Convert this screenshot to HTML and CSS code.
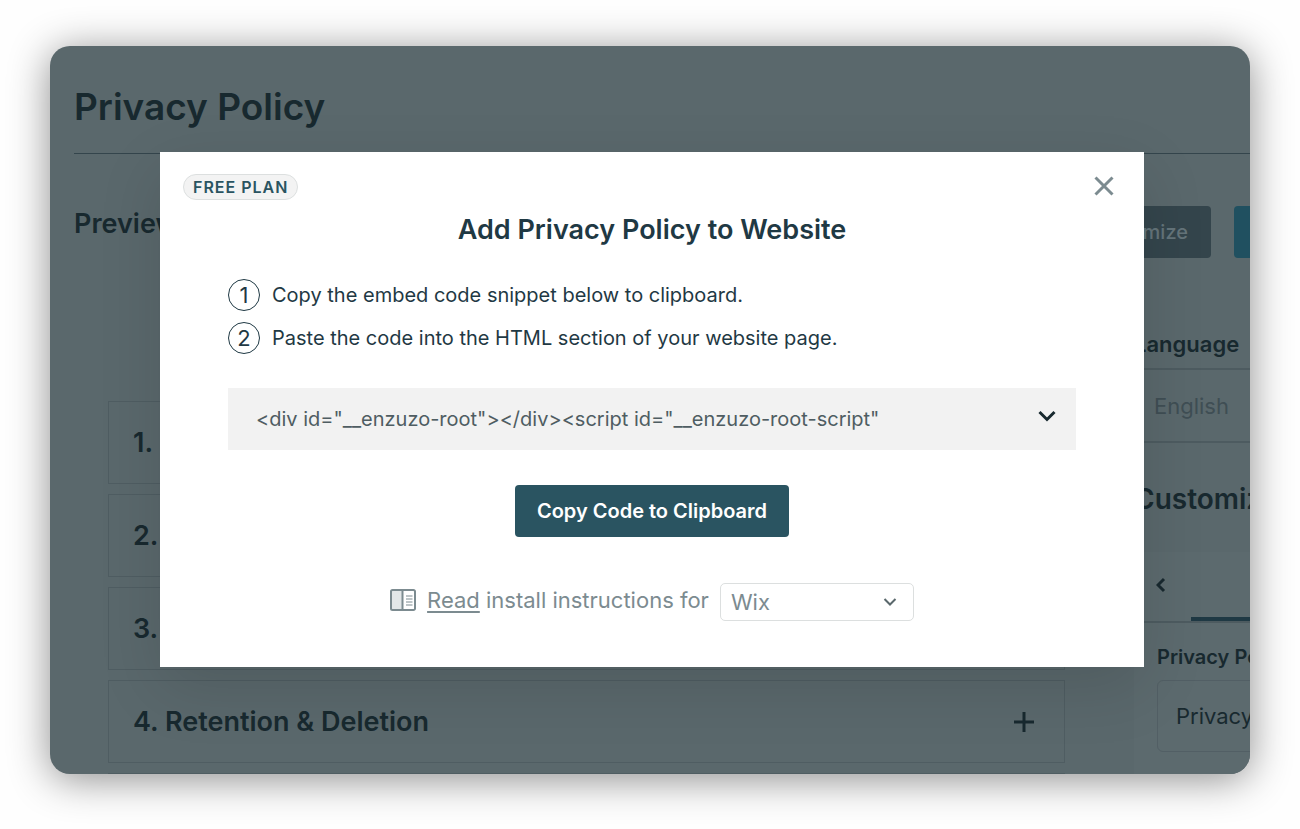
FILE: index.html
```
<!DOCTYPE html>
<html lang="en">
<head>
    <meta charset="UTF-8">
    <meta name="viewport" content="width=device-width, initial-scale=1.0">
    <title>Privacy Policy</title>
    <link rel="stylesheet" href="styles.css">
</head>
<body>

    <div class="window">
        <header class="page-header">
            <h1>Privacy Policy</h1>
        </header>

        <div class="toolbar">
            <h2>Preview</h2>
            <div class="toolbar-buttons">
                <button class="btn-customize">Customize</button>
                <button class="btn-add" aria-label="Add to website"></button>
            </div>
        </div>

        <div class="content">
            <div class="policy-list">
                <button class="policy-item"><span>1.</span></button>
                <button class="policy-item"><span>2.</span></button>
                <button class="policy-item"><span>3.</span></button>
                <button class="policy-item">
                    <span>4. Retention &amp; Deletion</span>
                    <svg width="22" height="22" viewBox="0 0 22 22"><path d="M11 1v20M1 11h20"/></svg>
                </button>
                <button class="policy-item"></button>
            </div>

            <aside class="sidebar">
                <label class="language-label" for="language">Language</label>
                <select id="language" class="language-select">
                    <option>English</option>
                </select>
                <h2 class="sidebar-title">Customize</h2>
                <div class="panel">
                    <div class="tabs">
                        <button class="tab-prev" aria-label="Previous">
                            <svg width="10" height="16" viewBox="0 0 10 16"><path d="M8 2L2 8l6 6"/></svg>
                        </button>
                        <span class="tab-active"></span>
                    </div>
                    <div class="field">
                        <label for="policyName">Privacy Policy</label>
                        <input type="text" id="policyName" value="Privacy Policy">
                    </div>
                </div>
            </aside>
        </div>

        <!-- Modal -->
        <div class="overlay">
            <div class="modal" role="dialog" aria-labelledby="modalTitle">
                <div class="modal-top">
                    <span class="badge">FREE PLAN</span>
                    <button class="close" aria-label="Close">
                        <svg width="20" height="20" viewBox="0 0 20 20"><path d="M1.5 1.5l17 17M18.5 1.5l-17 17"/></svg>
                    </button>
                </div>
                <h2 class="modal-title" id="modalTitle">Add Privacy Policy to Website</h2>

                <div class="modal-body">
                    <ol class="steps">
                        <li><span class="step-number">1</span>Copy the embed code snippet below to clipboard.</li>
                        <li><span class="step-number">2</span>Paste the code into the HTML section of your website page.</li>
                    </ol>

                    <button class="code-box">
                        <span>&lt;div id="__enzuzo-root"&gt;&lt;/div&gt;&lt;script id="__enzuzo-root-script"</span>
                        <svg width="18" height="18" viewBox="0 0 18 18"><path d="M1.500 2l7.500 7.500L16.500 2"/></svg>
                    </button>

                    <button class="btn-copy">Copy Code to Clipboard</button>

                    <div class="install">
                        <svg class="book" width="26" height="22" viewBox="0 0 26 22">
                            <path class="book-page" d="M2 2h10v18H2z"/>
                            <path d="M2.500 1h21A1.500 1.500 0 0 1 25 2.500v17a1.500 1.500 0 0 1-1.500 1.500h-21A1.500 1.500 0 0 1 1 19.500v-17A1.500 1.500 0 0 1 2.500 1zM12.500 1v20"/>
                            <path class="book-lines" d="M16 7h6.500M16 10h6.500M16 13h6.500M16 16h6.500"/>
                        </svg>
                        <label for="platform"><a href="#">Read</a> install instructions for</label>
                        <div class="platform">
                            <select id="platform">
                                <option>Wix</option>
                            </select>
                            <svg width="14" height="10" viewBox="0 0 14 10"><path d="M1.500 2L7 7.500 12.500 2"/></svg>
                        </div>
                    </div>
                </div>
            </div>
        </div>
    </div>

</body>
</html>
```
FILE: styles.css
```
/* General Styles */
* {
    box-sizing: border-box;
}

body {
    display: flex;
    height: 100vh;
    margin: 0;
    padding: 46px 50px 55px;
    background: #fefefe;
    color: #18292f;
    font-family: Inter, "Liberation Sans", sans-serif;
}

h1, h2 {
    margin: 0;
    font-weight: 600;
}

button, input, select {
    margin: 0;
    border: none;
    font-family: inherit;
    color: inherit;
    background: none;
    appearance: none;
}

button {
    cursor: pointer;
}

svg {
    flex: none;
    fill: none;
    stroke: currentColor;
    stroke-width: 3;
}

/* Window */
.window {
    position: relative;
    flex: 1;
    min-width: 0;
    overflow: hidden;
    border-radius: 20px;
    background: #5a686c;
    box-shadow: 0 5px 40px rgba(0, 0, 0, 0.45);
}

.page-header {
    margin-left: 24px;
    padding: 36px 0 21px;
    border-bottom: 1px solid #34454c;
}

.page-header h1 {
    font-size: 37px;
    line-height: 50px;
}

.toolbar {
    display: flex;
    justify-content: space-between;
    margin-left: 24px;
    padding-top: 52px;
}

.toolbar h2 {
    font-size: 27px;
    line-height: 36px;
}

.toolbar-buttons {
    display: flex;
    gap: 23px;
}

.btn-customize {
    height: 52px;
    padding: 0 23px;
    border-radius: 4px;
    background: #34454c;
    color: #64747a;
    font-size: 20px;
    font-weight: 500;
}

.btn-add {
    width: 16px;
    border-radius: 4px 0 0 4px;
    background: #205060;
}

/* Policy List */
.content {
    display: flex;
}

.policy-list {
    display: flex;
    flex-direction: column;
    flex: 1;
    gap: 10px;
    padding: 143px 69px 0 58px;
}

.policy-item {
    display: flex;
    align-items: center;
    justify-content: space-between;
    flex: none;
    height: 83px;
    padding: 0 29px 0 24px;
    border: 1px solid #4f5d62;
    font-size: 27px;
    font-weight: 600;
}

/* Sidebar */
.sidebar {
    flex: 0 0 116px;
    min-width: 0;
    overflow: hidden;
    padding-top: 72px;
    white-space: nowrap;
}

.language-label {
    display: block;
    font-size: 22px;
    line-height: 28px;
    font-weight: 600;
}

.language-select {
    width: 100%;
    height: 75px;
    margin-top: 10px;
    padding: 0 20px;
    border-top: 2px solid #4d5b60;
    border-bottom: 2px solid #4d5b60;
    color: #3f4e54;
    font-size: 22px;
}

.sidebar-title {
    margin-top: 38px;
    font-size: 28px;
    line-height: 36px;
}

.panel {
    margin-top: 35px;
    background: #5c6a6e;
}

.tabs {
    display: flex;
    justify-content: space-between;
    height: 71px;
    border-bottom: 2px solid #4d5b60;
}

.tab-prev {
    padding: 0 0 0 22px;
}

.tab-active {
    width: 59px;
    border-bottom: 4px solid #1f3944;
}

.field {
    padding: 21px 0 24px 23px;
}

.field label {
    display: block;
    font-size: 20px;
    line-height: 26px;
    font-weight: 600;
}

.field input {
    width: 300px;
    height: 72px;
    margin-top: 10px;
    padding: 0 18px;
    border: 1px solid #525f65;
    border-radius: 6px;
    font-size: 22px;
}

/* Modal */
.overlay {
    position: absolute;
    inset: 0;
    padding: 106px 106px 0 110px;
}

.modal {
    padding: 22px 23px 46px;
    background: white;
    color: #1f3944;
    box-shadow: 0 20px 60px rgba(0, 0, 0, 0.12);
}

.modal-top {
    display: flex;
    align-items: flex-start;
    justify-content: space-between;
}

.badge {
    padding: 0 9px;
    border: 1px solid #dcdfdf;
    border-radius: 13px;
    background: #f3f3f3;
    color: #2a5461;
    font-size: 16px;
    line-height: 24px;
    font-weight: 600;
    letter-spacing: 1px;
}

.close {
    display: flex;
    padding: 2px 7px;
    color: #7c8b90;
}

.modal-title {
    margin-top: 12px;
    font-size: 27px;
    line-height: 36px;
    text-align: center;
}

.modal-body {
    display: flex;
    flex-direction: column;
    align-items: center;
    padding: 31px 45px 0;
}

/* Steps */
.steps {
    display: flex;
    flex-direction: column;
    align-self: stretch;
    gap: 11px;
    margin: 0;
    padding: 0;
    list-style: none;
    font-size: 20px;
}

.steps li {
    display: flex;
    align-items: center;
    gap: 12px;
}

.step-number {
    width: 32px;
    height: 32px;
    border: 1px solid #1f3944;
    border-radius: 50%;
    font-size: 22px;
    line-height: 30px;
    text-align: center;
}

/* Embed Code */
.code-box {
    display: flex;
    align-items: center;
    justify-content: space-between;
    align-self: stretch;
    height: 62px;
    margin-top: 34px;
    padding: 0 20px 0 28px;
    background: #f2f2f2;
    color: #4f5d62;
    font-size: 20px;
}

.code-box svg {
    color: #18292f;
}

.btn-copy {
    height: 52px;
    margin-top: 35px;
    padding: 0 22px;
    border-radius: 4px;
    background: #2a5461;
    color: white;
    font-size: 20px;
    font-weight: 600;
}

/* Install Instructions */
.install {
    display: flex;
    align-items: flex-start;
    gap: 11px;
    margin-top: 46px;
    color: #7c8b90;
    font-size: 22px;
    line-height: 34px;
}

.install a {
    color: inherit;
    text-underline-offset: 3px;
}

.book {
    margin-top: 6px;
    stroke-width: 2;
}

.book-page {
    fill: #e3e7e8;
    stroke: none;
}

.book-lines {
    stroke-width: 1;
}

.platform {
    display: grid;
    align-items: center;
}

.platform select,
.platform svg {
    grid-area: 1 / 1;
}

.platform select {
    width: 194px;
    height: 38px;
    padding: 0 10px;
    border: 1px solid #dcdfdf;
    border-radius: 5px;
    font-size: 22px;
}

.platform svg {
    justify-self: end;
    margin-right: 17px;
    color: #5a686c;
    stroke-width: 2;
    pointer-events: none;
}
```
